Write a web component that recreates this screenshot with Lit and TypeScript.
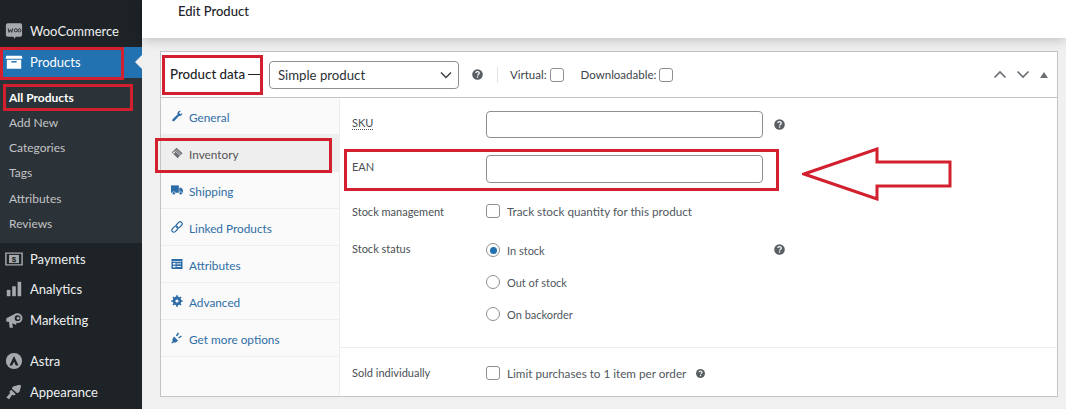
import { LitElement, html, css } from "lit";
import { customElement } from "lit/decorators.js";

const help = (cls = "") => html`<svg class="help ${cls}" viewBox="0 0 16 16"><circle cx="8" cy="8" r="6.500" fill="#5a5f63"/><path d="M5.900 6.300c0-1.300 1-1.900 2.100-1.900s2.200.6 2.200 1.800c0 1.500-1.900 1.500-1.900 3" fill="none" stroke="#fff" stroke-width="1.500"/><rect x="7.200" y="10.200" width="1.700" height="1.600" fill="#fff"/></svg>`;

const menuIcons: Record<string, unknown> = {
  woo: html`<svg viewBox="0 0 20 20"><path d="M3 1.500h14a2 2 0 0 1 2 2v11a2 2 0 0 1-2 2h-5l-1.500 2-1-2H3a2 2 0 0 1-2-2v-11a2 2 0 0 1 2-2z" fill="#a7aaad"/><path d="M3.500 7l1 4.500 1.500-3 1.500 3 1-4.500" fill="none" stroke="#1d2327" stroke-width="1"/><circle cx="12" cy="9.300" r="1.700" fill="none" stroke="#1d2327"/><circle cx="16" cy="9.300" r="1.700" fill="none" stroke="#1d2327"/></svg>`,
  box: html`<svg viewBox="0 0 20 20"><path d="M1.500 3h17l1 3.500H.5z" fill="#fff"/><path d="M2 7.500h16v10H2z" fill="#fff"/><rect x="7" y="9" width="6" height="1.600" fill="#2271b1"/></svg>`,
  pay: html`<svg viewBox="0 0 20 20"><path d="M1 3.500h18v13H1z" fill="none" stroke="#a7aaad" stroke-width="1.600"/><rect x="4.500" y="5.500" width="11" height="9" fill="#a7aaad"/><text x="10" y="13.300" font-size="9" font-weight="700" text-anchor="middle" fill="#1d2327" font-family="Liberation Sans">$</text></svg>`,
  chart: html`<svg viewBox="0 0 20 20"><rect x="2" y="11" width="4" height="7" fill="#a7aaad"/><rect x="8" y="7" width="4" height="11" fill="#a7aaad"/><rect x="14" y="2" width="4" height="16" fill="#a7aaad"/></svg>`,
  mega: html`<svg viewBox="0 0 20 20"><path d="M1.500 8l11-5.500v13L8 13.500l.8 5H5.200L4.400 12H1.500z" fill="#a7aaad"/><circle cx="14" cy="8" r="5.400" fill="#a7aaad"/><circle cx="14" cy="8" r="3.200" fill="#1d2327"/><circle cx="14.600" cy="8" r="1.600" fill="#a7aaad"/></svg>`,
  astra: html`<svg viewBox="0 0 20 20"><circle cx="10" cy="10" r="9" fill="#a7aaad"/><path d="M10 4.500l5 10.500h-3l-2-4.200-2 4.200H5z" fill="#1d2327"/></svg>`,
  brush: html`<svg viewBox="0 0 20 20"><path d="M9 4l7-2 2 1-2 7-2.500 1.500L7.500 6z" fill="#a7aaad"/><path d="M7 7.500l5 5-2 1.500-2-1-3.500 5L1.500 16l4-4.500-.5-2z" fill="#a7aaad"/></svg>`,
};

const tabIcons: Record<string, unknown> = {
  wrench: html`<svg viewBox="0 0 12 12"><path d="M11.300 3c.2 1.500-1.300 3.300-3.300 2.900L3.300 11c-1.100 1-2.800-.6-1.700-1.800L6.500 4.400C6 2.300 7.900.4 9.800.9L8 2.700 9.500 4.200z" fill="#2c6ba6"/></svg>`,
  tag: html`<svg viewBox="0 0 12 12"><path d="M0.800 5.200L5.500 0.800 11.500 6.200 6.500 11.300z" fill="#6a6e72"/><path d="M3.500 3.500l5.500 5M5 2.500l5 5" stroke="#eee" stroke-width=".7"/><circle cx="3" cy="5.500" r="1" fill="#eee"/></svg>`,
  truck: html`<svg viewBox="0 0 13 12"><rect x="0" y="1" width="8.500" height="8" fill="#2c6ba6"/><path d="M9 3.500h2.200L13 6v3H9z" fill="#2c6ba6"/><circle cx="3" cy="9.500" r="1.700" fill="#2c6ba6" stroke="#fff" stroke-width=".6"/><circle cx="10.500" cy="9.500" r="1.700" fill="#2c6ba6" stroke="#fff" stroke-width=".6"/></svg>`,
  link: html`<svg viewBox="0 0 12 12"><g fill="none" stroke="#2c6ba6" stroke-width="1.200" transform="rotate(-45 6 6)"><rect x="-.5" y="4" width="7" height="4" rx="2"/><rect x="5.500" y="4" width="7" height="4" rx="2"/></g></svg>`,
  attrs: html`<svg viewBox="0 0 12 12"><path d="M.5 1h11v10H.5z" fill="#2c6ba6"/><path d="M1.500 3.200h9v.7h-9z" fill="#fff"/><rect x="2" y="5" width="2.500" height="1.600" fill="#fff"/><rect x="2" y="7.800" width="2.500" height="1.600" fill="#fff"/><rect x="5.500" y="5.400" width="4.500" height=".9" fill="#fff"/><rect x="5.500" y="8.100" width="4.500" height=".9" fill="#fff"/></svg>`,
  gear: html`<svg viewBox="0 0 12 12"><circle cx="6" cy="6" r="3.400" fill="none" stroke="#2c6ba6" stroke-width="2"/><path d="M6 .3v11.400M.3 6h11.400M2 2l8 8M10 2l-8 8" stroke="#2c6ba6" stroke-width="1.700"/><circle cx="6" cy="6" r="1.600" fill="#fafafa"/></svg>`,
  plug: html`<svg viewBox="0 0 12 12"><path d="M3 4.500L7 8.500 5 10.500H2.500L1 11.500.3 10.800 1.500 9.500V7z" fill="#2c6ba6"/><path d="M5.500 4l2-3M7.500 6l3-2" stroke="#2c6ba6" stroke-width="1.500"/></svg>`,
};

@customElement("app-root")
export class AppRoot extends LitElement {
  static styles = css`
    :host {
      display: block;
      position: relative;
      width: 1066px;
      height: 409px;
      overflow: hidden;
      background: #f0f0f1;
      font-family: Lato, "Open Sans", sans-serif;
      font-size: 12px;
      color: #3c434a;
    }
    .page { display: flex; height: 409px; }
    .side { width: 142px; flex: none; background: #1d2327; padding-top: 16px; box-sizing: border-box; }
    .mi { display: flex; align-items: center; height: 30.5px; color: #f0f0f1; font-size: 13px; position: relative; }
    .mi svg { width: 18px; height: 18px; margin: 0 7px 0 5px; flex: none; }
    .mi.cur { background: #2271b1; color: #fff; height: 31px; }
    .mi.cur::after {
      content: ""; position: absolute; right: 0; top: 8px;
      border: 7.5px solid transparent; border-right-color: #f0f0f1; border-left: 0;
    }
    .mi.gap { margin-top: 11px; }
    .sub { background: #2c3338; padding: 7px 0 7px; }
    .sub div { height: 25.3px; line-height: 25.3px; padding-left: 9px; color: #c3c4c7; font-size: 12px; }
    .sub div.on { color: #fff; font-weight: 700; }
    .main { flex: 1; min-width: 0; display: flex; flex-direction: column; }
    .top { height: 38px; flex: none; background: #fff; padding: 2px 0 0 36px; box-sizing: border-box; font-size: 13px; font-weight: 500; color: #1d2327; box-shadow: 0 0 14px rgba(0,0,0,.28); line-height: 18px; position: relative; }
    .panel { margin: 13px 8px 0 18px; height: 346px; flex: none; box-sizing: border-box; background: #fff; border: 1px solid #c3c4c7; display: flex; flex-direction: column; }
    .head { height: 46px; flex: none; border-bottom: 1px solid #c3c4c7; display: flex; align-items: center; box-sizing: border-box; }
    .title { font-size: 13.300px; font-weight: 500; color: #1d2327; margin-left: 9px; width: 78px; white-space: nowrap; margin-top: -2px; }
    .dash { width: 13px; height: 1px; background: #1d2327; margin-right: 8px; }
    .select { width: 190px; height: 28px; box-sizing: border-box; border: 1px solid #8c8f94; border-radius: 4px; display: flex; align-items: center; justify-content: space-between; padding: 0 6px 0 8px; font-size: 13.200px; color: #2c3338; }
    .select svg { width: 12px; height: 8px; }
    .help { width: 13px; height: 13px; flex: none; }
    .head .help { margin-left: 12px; }
    .vr { width: 1px; height: 16px; background: #e4e4e4; margin: 0 12px 0 13px; }
    .lbl { font-size: 11.500px; color: #3c434a; }
    .cb { width: 14px; height: 14px; box-sizing: border-box; border: 1px solid #8c8f94; border-radius: 3px; background: #fff; flex: none; display: block; }
    .head .cb { margin-left: 3px; }
    .head .lbl.dl { margin-left: 17px; }
    .ctrls { margin-left: auto; display: flex; align-items: center; gap: 9px; margin-right: 8px; }
    .ctrls svg { display: block; }
    .body { flex: 1; display: flex; min-height: 0; }
    .tabs { width: 179px; flex: none; background: #fafafa; border-right: 1px solid #eee; box-sizing: border-box; }
    .tab { height: 37px; box-sizing: border-box; border-bottom: 1px solid #eee; display: flex; align-items: center; padding: 3px 0 0 10px; color: #2f6ea6; font-size: 11.800px; }
    .tab svg { width: 12px; height: 12px; margin-right: 6px; flex: none; position: relative; top: -2px; }
    .tab.on { background: #eee; color: #555; }
    .fields { flex: 1; min-width: 0; display: flex; flex-direction: column; }
    .row { display: flex; align-items: center; padding-left: 12px; }
    .row .name { width: 134px; flex: none; font-size: 11px; color: #4a4f54; }
    .sku { text-decoration: underline dotted; text-underline-offset: 2px; }
    .input { width: 277px; height: 27px; box-sizing: border-box; border: 1px solid #8c8f94; border-radius: 4px; background: #fff; flex: none; }
    .row .help { margin-left: 10px; }
    .r1 { margin-top: 13px; height: 27px; }
    .r1 .name { margin-top: -4px; }
    .r2 { margin-top: 17px; height: 28px; }
    .r2 .name { margin-top: -6px; }
    .r2 .input { height: 28px; }
    .r3 { margin-top: 21px; height: 14px; }
    .r3 .cb, .last .cb { margin-right: 7px; }
    .status { display: flex; margin-top: 25px; padding-left: 12px; height: 101px; box-sizing: border-box; }
    .status .name { width: 134px; flex: none; font-size: 11px; color: #4a4f54; line-height: 18px; margin-top: -3px; }
    .radios { width: 277px; display: flex; flex-direction: column; gap: 18px; }
    .radio { display: flex; align-items: center; height: 14px; font-size: 11px; color: #50575e; }
    .rd { width: 14px; height: 14px; box-sizing: border-box; border: 1px solid #8c8f94; border-radius: 50%; margin-right: 7px; flex: none; display: flex; align-items: center; justify-content: center; }
    .rd.on::after { content: ""; width: 7px; height: 7px; border-radius: 50%; background: #2271b1; }
    .status > .help { margin-left: 10px; }
    .rule { height: 1px; background: #eee; flex: none; margin-top: 3px; }
    .last { margin-top: 18px; height: 14px; }
    .last .name { margin-top: -1px; }
    .last .help { width: 11px; height: 11px; margin-left: 9px; }
    .note { font-size: 11.700px; color: #50575e; }
    .mark { position: absolute; box-sizing: border-box; border: 3px solid #d3202e; pointer-events: none; }
    .m1 { left: 0; top: 47px; width: 124px; height: 33px; }
    .m2 { left: 3px; top: 84px; width: 130px; height: 27px; }
    .m3 { left: 162px; top: 55px; width: 101px; height: 40px; }
    .m4 { left: 155px; top: 138px; width: 177px; height: 35px; }
    .m5 { left: 344px; top: 149px; width: 435px; height: 42px; }
    .arrow { position: absolute; left: 802px; top: 147px; width: 152px; height: 54px; pointer-events: none; }
  `;

  render() {
    const upper = [["General", "wrench"], ["Inventory", "tag"], ["Shipping", "truck"], ["Linked Products", "link"], ["Attributes", "attrs"], ["Advanced", "gear"], ["Get more options", "plug"]];
    return html`
      <div class="page">
        <nav class="side">
          <div class="mi">${menuIcons.woo}WooCommerce</div>
          <div class="mi cur">${menuIcons.box}Products</div>
          <div class="sub">
            <div class="on">All Products</div><div>Add New</div><div>Categories</div><div>Tags</div><div>Attributes</div><div>Reviews</div>
          </div>
          <div class="mi">${menuIcons.pay}Payments</div>
          <div class="mi">${menuIcons.chart}Analytics</div>
          <div class="mi">${menuIcons.mega}Marketing</div>
          <div class="mi gap">${menuIcons.astra}Astra</div>
          <div class="mi">${menuIcons.brush}Appearance</div>
        </nav>
        <div class="main">
          <div class="top">Edit Product</div>
          <section class="panel">
            <div class="head">
              <span class="title">Product data</span><span class="dash"></span>
              <div class="select">Simple product<svg viewBox="0 0 12 8"><path d="M1 1.500l5 5 5-5" fill="none" stroke="#3c434a" stroke-width="1.500"/></svg></div>
              ${help()}<span class="vr"></span>
              <span class="lbl">Virtual:</span><span class="cb"></span>
              <span class="lbl dl">Downloadable:</span><span class="cb"></span>
              <div class="ctrls">
                <svg width="14" height="9" viewBox="0 0 14 9"><path d="M1.500 7.500L7 2l5.500 5.500" fill="none" stroke="#6b7075" stroke-width="1.700"/></svg>
                <svg width="14" height="9" viewBox="0 0 14 9"><path d="M1.500 1.500L7 7l5.500-5.500" fill="none" stroke="#6b7075" stroke-width="1.700"/></svg>
                <svg width="10" height="8" viewBox="0 0 10 8"><path d="M5 1l4 6H1z" fill="#6b7075"/></svg>
              </div>
            </div>
            <div class="body">
              <div class="tabs">
                ${upper.map(([t, i]) => html`<div class="tab ${t === "Inventory" ? "on" : ""}">${tabIcons[i]}${t}</div>`)}
              </div>
              <div class="fields">
                <div class="row r1"><span class="name"><span class="sku">SKU</span></span><span class="input"></span>${help()}</div>
                <div class="row r2"><span class="name">EAN</span><span class="input"></span></div>
                <div class="row r3"><span class="name">Stock management</span><span class="cb"></span><span class="note">Track stock quantity for this product</span></div>
                <div class="status">
                  <span class="name">Stock status</span>
                  <div class="radios">
                    <div class="radio"><span class="rd on"></span>In stock</div>
                    <div class="radio"><span class="rd"></span>Out of stock</div>
                    <div class="radio"><span class="rd"></span>On backorder</div>
                  </div>
                  ${help()}
                </div>
                <div class="rule"></div>
                <div class="row last"><span class="name">Sold individually</span><span class="cb"></span><span class="note">Limit purchases to 1 item per order</span>${help()}</div>
              </div>
            </div>
          </section>
        </div>
      </div>
      <div class="mark m1"></div><div class="mark m2"></div><div class="mark m3"></div><div class="mark m4"></div><div class="mark m5"></div>
      <svg class="arrow" viewBox="0 0 152 54"><path d="M2 27 L75 2 V15 H148 V39 H75 V52 Z" fill="none" stroke="#d3202e" stroke-width="3"/></svg>
    `;
  }
}
